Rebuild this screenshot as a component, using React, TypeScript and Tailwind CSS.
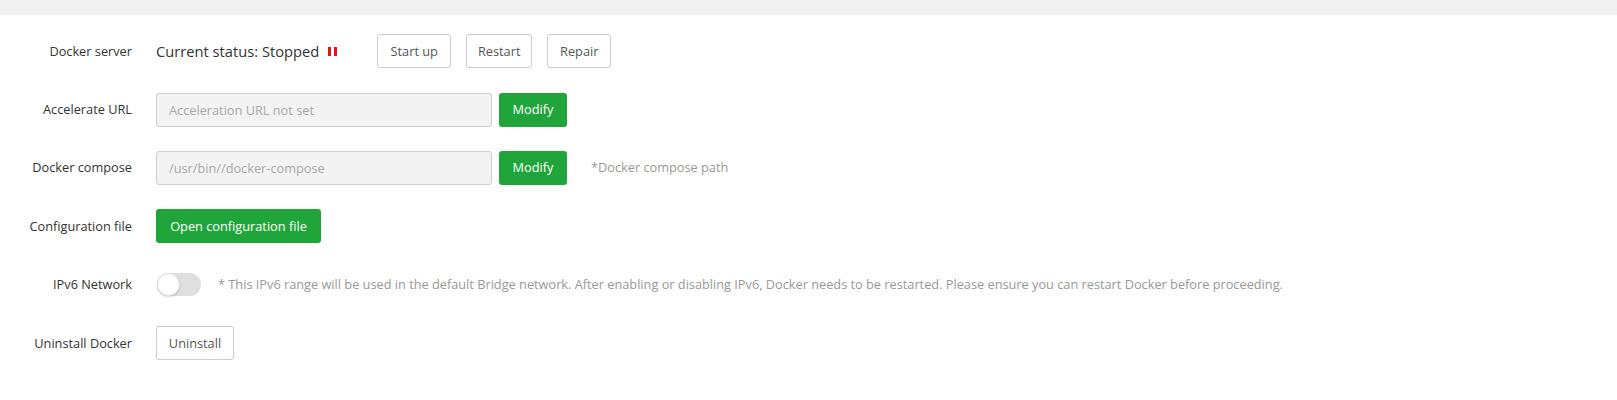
import { useState } from 'react'

const FONT = { fontFamily: '"Open Sans", "Liberation Sans", sans-serif' }

function Row({ label, children }: { label: string; children: React.ReactNode }) {
  return (
    <div className="flex h-[58.4px] items-center">
      <div className="w-[132px] shrink-0 text-right text-[12.75px] text-[#333]">{label}</div>
      <div className="ml-6 flex items-center">{children}</div>
    </div>
  )
}

function PlainButton({ children, className = '' }: { children: React.ReactNode; className?: string }) {
  return (
    <button
      type="button"
      className={`h-[34px] rounded-[3px] border border-[#ccc] bg-white text-[12.75px] text-[#555] hover:bg-[#f5f5f5] ${className}`}
    >
      {children}
    </button>
  )
}

function GreenButton({ children, className = '' }: { children: React.ReactNode; className?: string }) {
  return (
    <button
      type="button"
      className={`h-[34px] rounded-[3px] bg-[#20a53a] text-[12.75px] text-white hover:bg-[#10952a] ${className}`}
    >
      {children}
    </button>
  )
}

function ReadonlyInput({ value }: { value: string }) {
  return (
    <input
      readOnly
      placeholder={value}
      className="h-[34px] w-[336px] rounded-[3px] border border-[#ccc] bg-[#f3f3f3] px-3 text-[12.75px] text-[#999] outline-none placeholder:text-[#a9a9a9]"
    />
  )
}

export default function App() {
  const [ipv6, setIpv6] = useState(false)

  return (
    <div className="min-h-[400px] w-full bg-white" style={FONT}>
      <div className="h-[15px] bg-[#f1f1f1]" />
      <div className="pt-[7px]">
        <Row label="Docker server">
          <span className="text-[14.7px] text-[#333]">Current status: Stopped</span>
          <span className="ml-[9px] flex gap-[3px]">
            <span className="h-[9px] w-[3px] bg-[#ee1111]" />
            <span className="h-[9px] w-[3px] bg-[#ee1111]" />
          </span>
          <div className="ml-[40px] flex gap-[15px]">
            <PlainButton className="w-[74px]">Start up</PlainButton>
            <PlainButton className="w-[66px]">Restart</PlainButton>
            <PlainButton className="w-[64px]">Repair</PlainButton>
          </div>
        </Row>
        <Row label="Accelerate URL">
          <ReadonlyInput value="Acceleration URL not set" />
          <GreenButton className="ml-[7px] w-[68px]">Modify</GreenButton>
        </Row>
        <Row label="Docker compose">
          <ReadonlyInput value="/usr/bin//docker-compose" />
          <GreenButton className="ml-[7px] w-[68px]">Modify</GreenButton>
          <span className="ml-[24px] text-[12.75px] text-[#999]">*Docker compose path</span>
        </Row>
        <Row label="Configuration file">
          <GreenButton className="w-[165px]">Open configuration file</GreenButton>
        </Row>
        <Row label="IPv6 Network">
          <button
            type="button"
            role="switch"
            aria-checked={ipv6}
            onClick={() => setIpv6((v) => !v)}
            className={`relative ml-px h-[23px] w-[44px] rounded-full transition ${ipv6 ? 'bg-[#20a53a]' : 'bg-[#dfdfdf]'}`}
          >
            <span
              className={`absolute top-0 h-[23px] w-[23px] rounded-full border border-[#dfdfdf] bg-white shadow-[0_1px_2px_rgba(0,0,0,0.15)] transition ${ipv6 ? 'left-[21px]' : 'left-0'}`}
            />
          </button>
          <span className="ml-[17px] text-[12.75px] text-[#999]">
            * This IPv6 range will be used in the default Bridge network. After enabling or disabling IPv6, Docker needs to be restarted. Please ensure you can restart Docker before proceeding.
          </span>
        </Row>
        <Row label="Uninstall Docker">
          <PlainButton className="w-[78px]">Uninstall</PlainButton>
        </Row>
      </div>
    </div>
  )
}
